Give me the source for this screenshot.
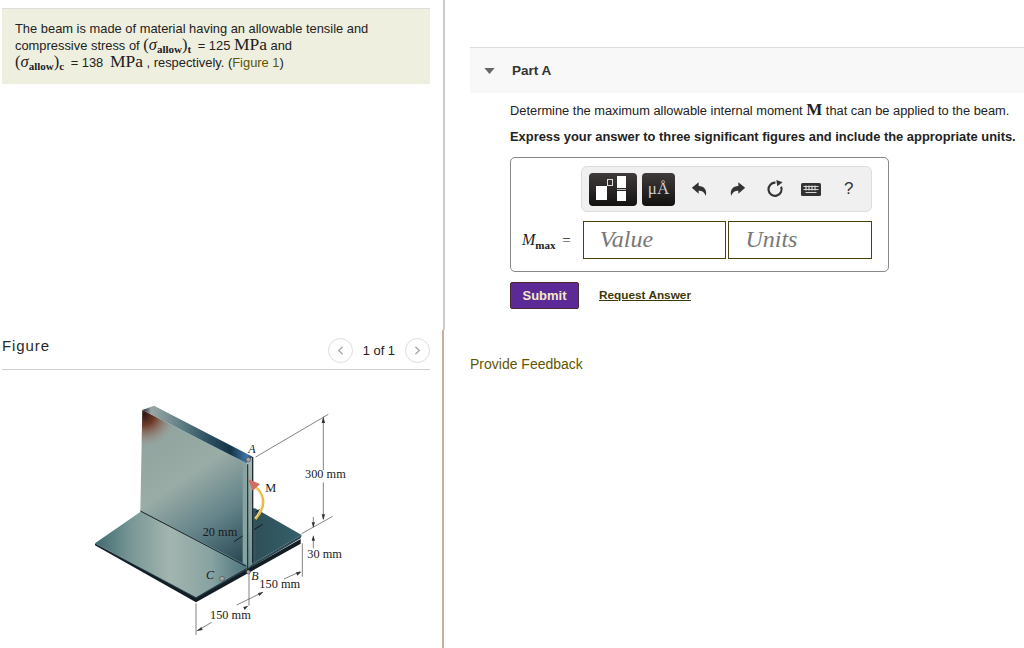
<div class="page">
  <section class="left">
    <div class="upper">
      <div class="intro">
        <p>The beam is made of material having an allowable tensile and</p>
        <p>compressive stress of <span class="m">(<i>σ</i><sub>allow</sub>)<sub>t</sub></span> = 125 <span class="mpa">MPa</span> and</p>
        <p><span class="m">(<i>σ</i><sub>allow</sub>)<sub>c</sub></span> = 138 <span class="mpa pad">MPa</span> , respectively. (<span class="flink">Figure 1</span>)</p>
      </div>
    </div>

    <div class="lower">
      <header class="fighead">
        <h2>Figure</h2>
        <div class="pager">
          <span class="circle"><svg viewBox="0 0 10 14" width="7" height="11"><path d="M8 1.500 2.500 7 8 12.500" /></svg></span>
          <span class="count">1 of 1</span>
          <span class="circle"><svg viewBox="0 0 10 14" width="7" height="11"><path d="M2 1.500 7.500 7 2 12.500" /></svg></span>
        </div>
      </header>

      <svg class="diagram" viewBox="0 0 840 735" width="280" height="245">
        <defs>
          <linearGradient id="wall" gradientUnits="userSpaceOnUse" x1="187" y1="45" x2="510" y2="520">
            <stop offset="0" stop-color="#8d9f9a" />
            <stop offset="0.42" stop-color="#9aaca6" />
            <stop offset="0.68" stop-color="#64848a" />
            <stop offset="1" stop-color="#1d3c49" />
          </linearGradient>
          <radialGradient id="rust" gradientUnits="userSpaceOnUse" cx="192" cy="58" r="95">
            <stop offset="0" stop-color="#2f1712" />
            <stop offset="0.35" stop-color="#6e3524" stop-opacity="0.95" />
            <stop offset="1" stop-color="#a58a7c" stop-opacity="0" />
          </radialGradient>
          <linearGradient id="top" gradientUnits="userSpaceOnUse" x1="187" y1="0" x2="518" y2="0">
            <stop offset="0" stop-color="#1c2233" />
            <stop offset="0.08" stop-color="#9aa7a5" />
            <stop offset="0.35" stop-color="#5f7f85" />
            <stop offset="0.6" stop-color="#2c5060" />
            <stop offset="0.8" stop-color="#143448" />
            <stop offset="0.95" stop-color="#3f77a8" />
            <stop offset="1" stop-color="#1d3a55" />
          </linearGradient>
          <linearGradient id="base" gradientUnits="userSpaceOnUse" x1="45" y1="0" x2="665" y2="0">
            <stop offset="0" stop-color="#3f6a70" />
            <stop offset="0.18" stop-color="#7a9897" />
            <stop offset="0.36" stop-color="#a3b5af" />
            <stop offset="0.56" stop-color="#88a3a2" />
            <stop offset="0.74" stop-color="#4a727b" />
            <stop offset="0.78" stop-color="#2f5058" />
            <stop offset="1" stop-color="#35606c" />
          </linearGradient>
          <linearGradient id="edge" x1="0" y1="0" x2="0" y2="1">
            <stop offset="0" stop-color="#a9b8b2" />
            <stop offset="1" stop-color="#6f9396" />
          </linearGradient>
        </defs>

        <polygon points="45,445 185,348 525,340 665,420 348,606" fill="url(#base)" />
        <polygon points="45,445 348,606 665,420 662,430 348,614 45,449" fill="#2b4a54" />
        <polygon points="45,447 348,610 662,432 662,446 348,622 45,451" fill="#121d24" />

        <polygon points="187,45 500,205 500,510 181,348" fill="url(#wall)" />
        <polygon points="187,45 500,205 500,510 181,348" fill="url(#rust)" />
        <polygon points="488,199 501,205 501,511 488,504" fill="#86a3a2" />
        <polygon points="187,45 222,32 518,185 500,205" fill="url(#top)" />
        <polygon points="500,205 518,185 518,505 500,525" fill="url(#edge)" />
        <line x1="503" y1="208" x2="503" y2="524" stroke="#1f2b30" stroke-width="3.500" />
        <line x1="518" y1="186" x2="518" y2="505" stroke="#1f2b30" stroke-width="4" />
        <line x1="181" y1="348" x2="497" y2="513" stroke="#141f24" stroke-width="3" />

        <path class="dim" d="M527 186 745 58M665 416 758 364M700 366V396M730 72V225M730 262V372M667 445V545M700 424V460M612 552 660 530M507 535V632M470 630 548 592M348 625V720M350 708 395 682" />
        <path class="dark" d="M462 440 488 423M522 404 548 388M527 352 540 342" />
        <g class="heads">
          <polygon points="730,64 725,84 735,84" />
          <polygon points="730,376 725,358 735,358" />
          <polygon points="700,398 695,382 705,382" />
          <polygon points="700,421 695,437 705,437" />
          <polygon points="664,530 648,532 652,542" />
          <polygon points="550,591 534,594 538,603" />
          <polygon points="505,632 490,636 494,645" />
          <polygon points="350,708 364,696 368,705" />
        </g>

        <path d="M514 268C552 290 564 330 526 372" fill="none" stroke="#e6b945" stroke-width="8" />
        <path d="M516 270C548 292 558 330 524 370" fill="none" stroke="#f8eeb8" stroke-width="2.500" />
        <polygon points="504,252 540,267 518,287" fill="#cf6f62" />

        <circle cx="505" cy="194" r="7" fill="#a7a7a0" stroke="#333" stroke-width="1.500" />
        <circle cx="505" cy="531" r="6" fill="#a7a7a0" stroke="#333" stroke-width="1.500" />
        <circle cx="426" cy="551" r="7" fill="#a7a7a0" stroke="#333" stroke-width="1.500" />

        <g class="lbl">
          <text x="675" y="250">300 mm</text>
          <text x="556" y="290">M</text>
          <text x="368" y="422">20 mm</text>
          <text x="682" y="490">30 mm</text>
          <text x="538" y="578">150 mm</text>
          <text x="390" y="672">150 mm</text>
          <text x="505" y="174" class="it">A</text>
          <text x="514" y="554" class="it">B</text>
          <text x="378" y="553" class="it">C</text>
        </g>
      </svg>
    </div>
  </section>

  <main class="right">
    <div class="parthead">
      <svg class="caret" viewBox="0 0 12 7" width="11" height="6"><polygon points="0,0 12,0 6,7" /></svg>
      <h2>Part A</h2>
    </div>

    <div class="body">
      <p class="q">Determine the maximum allowable internal moment <b class="bigm">M</b> that can be applied to the beam.</p>
      <p class="ex">Express your answer to three significant figures and include the appropriate units.</p>

      <div class="answer">
        <div class="toolbar">
          <button class="dark-btn tmpl" aria-label="templates">
            <span class="t1"></span><span class="t2"></span><span class="t3"></span><span class="t4"></span><span class="t5"></span>
          </button>
          <button class="dark-btn mu">μÅ</button>
          <svg class="tool undo" viewBox="0 0 20 20" width="17" height="17"><path d="M1 8 9 1.500V6C15.500 6 19 10.500 17.500 17.500 15.500 13 13 11.500 9 11.500V15Z" /></svg>
          <svg class="tool redo" viewBox="0 0 20 20" width="17" height="17"><path d="M19 8 11 1.500V6C4.500 6 1 10.500 2.500 17.500 4.500 13 7 11.500 11 11.500V15Z" /></svg>
          <svg class="tool reset" viewBox="0 0 20 20" width="18" height="18"><path class="ring" d="M10.500 3A7.300 7.300 0 1 0 16.800 7.500" /><polygon points="11.500,0 18.500,2.500 12.500,7" /></svg>
          <svg class="tool kbd" viewBox="0 0 20 13" width="20" height="13"><rect width="20" height="13" rx="1.500" /><path class="keys" d="M2.500 3.500H17.500M2.500 6.500H17.500M4.500 9.500H15.500M5 2.500V7.500M8 2.500V7.500M11 2.500V7.500M14 2.500V7.500" /></svg>
          <span class="help">?</span>
        </div>
        <div class="row">
          <span class="label"><i>M</i><sub>max</sub> =</span>
          <span class="field">Value</span>
          <span class="field second">Units</span>
        </div>
      </div>

      <div class="actions">
        <button class="submit">Submit</button>
        <a href="#top" class="req">Request Answer</a>
      </div>
    </div>

    <a href="#top" class="feedback">Provide Feedback</a>
  </main>
</div>

<style>
  :global(body) { margin: 0; background: #fff; }
  .page {
    display: flex;
    width: 1024px;
    height: 648px;
    overflow: hidden;
    font-family: "Liberation Sans", Arial, sans-serif;
    color: #222;
    font-size: 12px;
  }
  p, h2 { margin: 0; font-weight: normal; }
  .left { width: 445px; flex: none; }
  .upper {
    height: 330px;
    width: 445px;
    box-sizing: border-box;
    padding-top: 8px;
    border-right: 2px solid #cdcdc8;
  }
  .lower {
    height: 318px;
    width: 444px;
    box-sizing: border-box;
    padding-top: 5px;
    border-right: 2px solid #c9ae9f;
  }
  .intro {
    margin-left: 2px;
    width: 428px;
    height: 76px;
    box-sizing: border-box;
    padding: 11px 13px;
    background: #eeefdf;
    border-top: 1px solid #ddd;
    line-height: 17.500px;
    font-size: 12.900px;
  }
  .intro p { white-space: nowrap; height: 17px; }
  .m { font-family: "Liberation Serif", serif; font-size: 16.500px; line-height: 0; margin-right: 3px; }
  .m sub { font-size: 11px; font-weight: bold; line-height: 0; vertical-align: -3px; }
  .mpa { font-family: "Liberation Serif", serif; font-size: 17.500px; line-height: 0; }
  .mpa.pad { margin-left: 3px; }
  .flink { color: #5f5600; }

  .fighead {
    margin-left: 2px;
    width: 428px;
    height: 35px;
    box-sizing: border-box;
    border-bottom: 1px solid #cfcfcf;
    display: flex;
    justify-content: space-between;
    align-items: flex-start;
  }
  .fighead h2 { font-size: 15px; letter-spacing: 0.9px; color: #2a2a2a; margin-top: 2px; }
  .pager { display: flex; align-items: center; gap: 10px; margin-top: 3px; }
  .circle {
    width: 25px; height: 25px;
    box-sizing: border-box;
    border: 1px solid #ddd;
    border-radius: 50%;
    display: flex; align-items: center; justify-content: center;
  }
  .circle path { fill: none; stroke: #aaa; stroke-width: 2; }
  .count { font-size: 12.900px; }
  .diagram { display: block; margin: 25px 0 0 80px; }
  .dim { fill: none; stroke: #444; stroke-width: 2; }
  .dark { fill: none; stroke: #111; stroke-width: 2.500; }
  .heads polygon { fill: #333; }
  .lbl text { font-family: "Liberation Serif", serif; font-size: 37px; fill: #1a1a1a; }
  .lbl .it { font-style: italic; font-size: 36px; }

  .right { flex: 1; padding: 47px 0 0 25px; min-width: 0; }
  .parthead {
    height: 46px;
    box-sizing: border-box;
    border-top: 1px solid #ddd;
    background: #f8f8f8;
    display: flex;
    align-items: center;
    padding-left: 14px;
  }
  .caret polygon { fill: #666; }
  .parthead h2 { font-size: 13.500px; font-weight: bold; color: #333; margin-left: 17px; }
  .body { margin-left: 40px; }
  .q { margin-top: 9px; font-size: 12.850px; line-height: 16px; white-space: nowrap; }
  .bigm { font-family: "Liberation Serif", serif; font-size: 17px; }
  .ex { margin-top: 10px; font-size: 12.900px; font-weight: bold; line-height: 16px; white-space: nowrap; }
  .answer {
    margin-top: 12px;
    width: 379px;
    height: 115px;
    box-sizing: border-box;
    border: 1px solid #888;
    border-radius: 5px;
    padding: 8px 16px 0 0;
  }
  .toolbar {
    margin-left: 70px;
    height: 46px;
    box-sizing: border-box;
    background: #f0f0f0;
    border: 1px solid #ddd;
    border-radius: 6px;
    display: flex;
    align-items: center;
    padding-left: 7px;
  }
  button { font-family: inherit; border: 0; padding: 0; }
  .dark-btn {
    height: 33px;
    border-radius: 4px;
    background: linear-gradient(#3f3b3a, #141111);
    color: #ccc;
  }
  .tmpl { width: 48px; position: relative; }
  .t1, .t2, .t3, .t4, .t5 { position: absolute; display: block; background: #fff; }
  .t1 { left: 7px; top: 13px; width: 11px; height: 14px; }
  .t2 { left: 18px; top: 6px; width: 6px; height: 7px; background: none; border: 1px solid #ddd; box-sizing: border-box; }
  .t3 { left: 28px; top: 3px; width: 9px; height: 12px; }
  .t4 { left: 28px; top: 16px; width: 9px; height: 1px; opacity: 0.7; }
  .t5 { left: 28px; top: 18px; width: 9px; height: 10px; }
  .mu { width: 33px; margin-left: 5px; font-family: "Liberation Serif", serif; font-size: 17px; }
  .tool path, .tool polygon, .tool rect { fill: #333; }
  .tool .ring { fill: none; stroke: #333; stroke-width: 2.400; }
  .tool .keys { fill: none; stroke: #d8d8d8; stroke-width: 1.200; }
  .undo { margin-left: 16px; }
  .redo { margin-left: 21px; }
  .reset { margin-left: 20px; }
  .kbd { margin-left: 17px; }
  .help { margin-left: 23px; font-size: 17px; color: #333; }
  .row { display: flex; align-items: stretch; margin-top: 9px; margin-left: 11px; }
  .label {
    width: 61px;
    font-family: "Liberation Serif", serif;
    font-size: 15px;
    align-self: center;
    white-space: nowrap;
  }
  .label i { font-size: 16px; }
  .label sub { font-size: 11px; font-weight: bold; line-height: 0; margin-right: 3px; }
  .field {
    width: 144px;
    height: 38px;
    box-sizing: border-box;
    border: 1.500px solid #4a4110;
    font-family: "Liberation Serif", serif;
    font-style: italic;
    font-size: 24px;
    color: #777;
    line-height: 35px;
    padding-left: 16px;
  }
  .second { margin-left: 2px; }
  .actions { display: flex; align-items: center; margin-top: 10px; }
  .submit {
    width: 69px;
    height: 27px;
    background: #5b2a96;
    border: 1px solid #4a2a30;
    border-radius: 2px;
    color: #f5e9c8;
    font-weight: bold;
    font-size: 13px;
  }
  .req { margin-left: 20px; color: #3f3708; font-weight: bold; font-size: 11.800px; margin-top: -2px; }
  .feedback { display: block; margin-top: 47px; color: #5f5600; font-size: 14px; text-decoration: none; }
</style>
